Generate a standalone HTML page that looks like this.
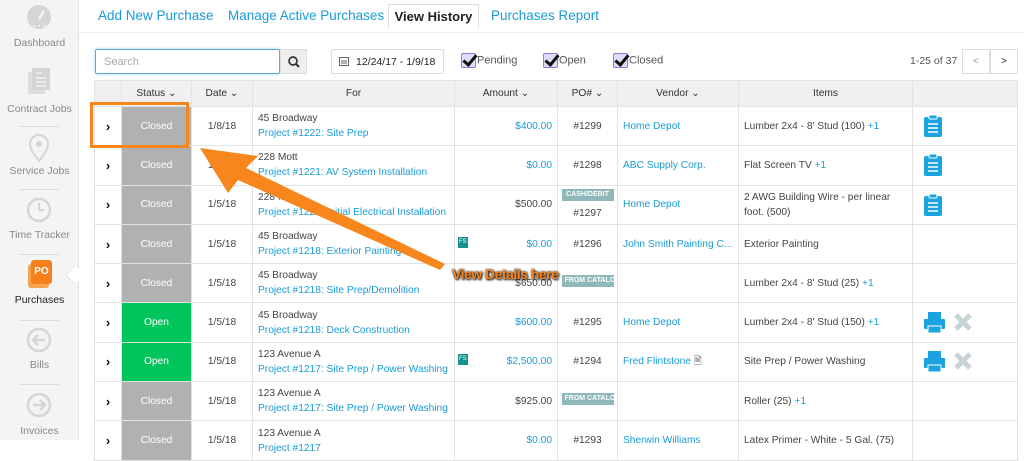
<!DOCTYPE html>
<html><head><meta charset="utf-8"><style>
*{box-sizing:border-box;margin:0;padding:0}
body{width:1024px;height:440px;overflow:hidden;background:#fff;font-family:"Liberation Sans",sans-serif;font-size:10.2px;color:#444;position:relative}
.side{position:absolute;left:0;top:0;width:79px;height:440px;background:#f4f4f4;border-right:1px solid #e2e2e2}
.si{position:absolute;left:0;width:79px;text-align:center;color:#888;font-size:10.5px}
.sep{position:absolute;left:19px;width:40px;border-top:1px solid #ddd}
.nav a{position:absolute;top:8px;font-size:13.5px;color:#1a9bd7;text-decoration:none}
.top{position:absolute;left:79px;top:32px;right:0;border-top:1px solid #eee}
table{position:absolute;left:94px;top:80px;border-collapse:collapse;table-layout:fixed;width:923px}
td,th{border:1px solid #e2e2e2;height:39.3px;vertical-align:middle;font-weight:normal;white-space:nowrap;overflow:hidden;line-height:15px}
th{height:26px;background:#f0f0f0;color:#333;font-size:10.2px}
.c{text-align:center}.r{text-align:right;padding-right:5px}
td.l{padding-left:5px}
.b{color:#1a9bd7}
.st{color:#fff;text-align:center;background:#b0b1b3}
.op{background:#00c55c}
.chev{font-weight:bold;color:#111;text-align:center;font-size:13px}
.tag{display:inline-block;background:#8fb8bb;color:#fff;font-size:7px;font-weight:bold;padding:1px 3px;width:52px;overflow:hidden;white-space:nowrap;line-height:10px}
.fs{display:inline-block;background:#16918e;color:#fff;font-size:6px;padding:1px;float:left;margin-left:3px;line-height:9px}
.cb{display:inline-block;width:15px;height:15px;border:1px solid #8b7fd9;border-radius:2px;background:#d9def6;position:relative;vertical-align:middle;margin-right:1px}
.cb:after{content:"";position:absolute;left:4px;top:-2px;width:5px;height:11px;border:solid #111;border-width:0 3px 3px 0;transform:rotate(40deg)}
</style></head><body>
<div class="side">
 <svg style="position:absolute;left:26px;top:4px" width="26" height="26"><circle cx="13" cy="13" r="12" fill="#d5d5d5"/><path d="M13 15 L18 7" stroke="#f4f4f4" stroke-width="2.5"/><circle cx="8" cy="22" r="1" fill="#f4f4f4"/><circle cx="13" cy="22" r="1" fill="#f4f4f4"/><circle cx="18" cy="22" r="1" fill="#f4f4f4"/></svg>
 <div class="si" style="top:37px">Dashboard</div>
 <svg style="position:absolute;left:27px;top:67px" width="24" height="28"><rect x="1" y="5" width="17" height="22" fill="#ddd"/><rect x="5" y="1" width="18" height="22" fill="#d5d5d5"/><path d="M9 6h6M9 11h10M9 15h10M9 19h10" stroke="#f4f4f4" stroke-width="1.5"/></svg>
 <div class="si" style="top:103px">Contract Jobs</div>
 <div class="sep" style="top:126px"></div>
 <svg style="position:absolute;left:29px;top:134px" width="20" height="28"><path d="M10 27 C3 18 1 14 1 10 A9 9 0 0 1 19 10 C19 14 17 18 10 27Z" fill="none" stroke="#d5d5d5" stroke-width="2"/><circle cx="10" cy="10" r="3" fill="#d5d5d5"/></svg>
 <div class="si" style="top:165px">Service Jobs</div>
 <div class="sep" style="top:189px"></div>
 <svg style="position:absolute;left:26px;top:197px" width="26" height="26"><circle cx="13" cy="13" r="11" fill="none" stroke="#d5d5d5" stroke-width="2.5"/><path d="M13 6v7h5" fill="none" stroke="#d5d5d5" stroke-width="2"/></svg>
 <div class="si" style="top:229px">Time Tracker</div>
 <div class="sep" style="top:254px"></div>
 <div style="position:absolute;left:28px;top:264px;width:21px;height:24px;background:#f7a24e;border-radius:3px"></div>
 <div style="position:absolute;left:31px;top:260px;width:21px;height:24px;background:#f7801e;border-radius:3px;color:#fff;font-weight:bold;font-size:10px;text-align:center;line-height:24px">PO</div>
 <div class="si" style="top:294px;color:#222">Purchases</div>
 <div style="position:absolute;left:68px;top:268px;width:14px;height:14px;background:#fff;transform:rotate(45deg);border-left:1px solid #e2e2e2;border-bottom:1px solid #e2e2e2"></div>
 <div class="sep" style="top:320px"></div>
 <svg style="position:absolute;left:26px;top:327px" width="26" height="26"><circle cx="13" cy="13" r="11" fill="none" stroke="#d5d5d5" stroke-width="2.5"/><path d="M19 13H8M12 8l-5 5 5 5" fill="none" stroke="#d5d5d5" stroke-width="2.5"/></svg>
 <div class="si" style="top:359px">Bills</div>
 <div class="sep" style="top:384px"></div>
 <svg style="position:absolute;left:26px;top:392px" width="26" height="26"><circle cx="13" cy="13" r="11" fill="none" stroke="#d5d5d5" stroke-width="2.5"/><path d="M7 13h11M14 8l5 5-5 5" fill="none" stroke="#d5d5d5" stroke-width="2.5"/></svg>
 <div class="si" style="top:425px">Invoices</div>
</div>
<div class="nav">
 <a style="left:98px">Add New Purchase</a>
 <a style="left:228px">Manage Active Purchases</a>
 <div style="position:absolute;left:388px;top:4px;width:91px;height:24px;border:1px solid #ddd;border-bottom:none;background:#fff;font-weight:bold;font-size:13px;color:#222;text-align:center;line-height:23px">View History</div>
 <a style="left:491px">Purchases Report</a>
</div>
<div class="top"></div>
<div style="position:absolute;left:95px;top:49px;width:185px;height:25px;border:1px solid #5aa8e0;border-radius:2px;box-shadow:0 0 3px #9cd0f2;padding:6px 8px;color:#aaa;font-size:11px">Search</div>
<div style="position:absolute;left:280px;top:49px;width:27px;height:25px;background:#eee;border:1px solid #ddd"><svg width="25" height="23"><circle cx="12" cy="11" r="4" fill="none" stroke="#333" stroke-width="1.7"/><path d="M15 14l3 3" stroke="#333" stroke-width="2"/></svg></div>
<div style="position:absolute;left:331px;top:49px;width:113px;height:25px;border:1px solid #ddd;border-radius:2px;padding:6px 0 0 24px;font-size:10.5px;color:#222">12/24/17 - 1/9/18</div>
<svg style="position:absolute;left:339px;top:56px" width="10" height="10"><rect x="0.5" y="1.5" width="9" height="8" fill="none" stroke="#666"/><path d="M2 5h6M2 7h6" stroke="#666"/></svg>
<div style="position:absolute;left:461px;top:53px;font-size:11px;color:#555"><span class="cb"></span>Pending</div>
<div style="position:absolute;left:543px;top:53px;font-size:11px;color:#555"><span class="cb"></span>Open</div>
<div style="position:absolute;left:613px;top:53px;font-size:11px;color:#555"><span class="cb"></span>Closed</div>
<div style="position:absolute;left:910px;top:55px;font-size:10.5px;color:#555">1-25 of 37</div>
<div style="position:absolute;left:962px;top:49px;width:28px;height:25px;border:1px solid #ddd;text-align:center;line-height:23px;color:#999">&lt;</div>
<div style="position:absolute;left:990px;top:49px;width:28px;height:25px;border:1px solid #ddd;text-align:center;line-height:23px;color:#222">&gt;</div>
<table>
<colgroup><col style="width:27px"><col style="width:70px"><col style="width:61px"><col style="width:202px"><col style="width:103px"><col style="width:60px"><col style="width:121px"><col style="width:174px"><col style="width:105px"></colgroup>
<tr><th></th><th>Status ⌄</th><th>Date ⌄</th><th>For</th><th>Amount ⌄</th><th>PO# ⌄</th><th>Vendor ⌄</th><th>Items</th><th></th></tr>
<tr><td class="chev">›</td><td class="st">Closed</td><td class="c">1/8/18</td><td class="l">45 Broadway<br><span class="b">Project #1222: Site Prep</span></td><td class="r b">$400.00</td><td class="c">#1299</td><td class="l b">Home Depot</td><td class="l">Lumber 2x4 - 8' Stud (100) <span class="b">+1</span></td><td class="l"><svg width="22" height="24" style="margin-left:4px;vertical-align:middle"><rect x="2" y="3" width="18" height="20" rx="2" fill="#1aa3e0"/><rect x="7" y="1" width="8" height="4" rx="1" fill="#1aa3e0" stroke="#fff"/><path d="M6 10h10M6 14h10M6 18h10" stroke="#fff" stroke-width="1.5"/></svg></td></tr>
<tr><td class="chev">›</td><td class="st">Closed</td><td class="c">1/5/18</td><td class="l">228 Mott<br><span class="b">Project #1221: AV System Installation</span></td><td class="r b">$0.00</td><td class="c">#1298</td><td class="l b">ABC Supply Corp.</td><td class="l">Flat Screen TV <span class="b">+1</span></td><td class="l"><svg width="22" height="24" style="margin-left:4px;vertical-align:middle"><rect x="2" y="3" width="18" height="20" rx="2" fill="#1aa3e0"/><rect x="7" y="1" width="8" height="4" rx="1" fill="#1aa3e0" stroke="#fff"/><path d="M6 10h10M6 14h10M6 18h10" stroke="#fff" stroke-width="1.5"/></svg></td></tr>
<tr><td class="chev">›</td><td class="st">Closed</td><td class="c">1/5/18</td><td class="l">228 Mott<br><span class="b">Project #1220: Initial Electrical Installation</span></td><td class="r">$500.00</td><td class="c"><span class="tag">CASH/DEBIT</span><br>#1297</td><td class="l b">Home Depot</td><td class="l">2 AWG Building Wire - per linear<br>foot. (500)</td><td class="l"><svg width="22" height="24" style="margin-left:4px;vertical-align:middle"><rect x="2" y="3" width="18" height="20" rx="2" fill="#1aa3e0"/><rect x="7" y="1" width="8" height="4" rx="1" fill="#1aa3e0" stroke="#fff"/><path d="M6 10h10M6 14h10M6 18h10" stroke="#fff" stroke-width="1.5"/></svg></td></tr>
<tr><td class="chev">›</td><td class="st">Closed</td><td class="c">1/5/18</td><td class="l">45 Broadway<br><span class="b">Project #1218: Exterior Painting</span></td><td class="r b"><span class="fs">FS</span>$0.00</td><td class="c">#1296</td><td class="l b">John Smith Painting C...</td><td class="l">Exterior Painting</td><td></td></tr>
<tr><td class="chev">›</td><td class="st">Closed</td><td class="c">1/5/18</td><td class="l">45 Broadway<br><span class="b">Project #1218: Site Prep/Demolition</span></td><td class="r">$650.00</td><td class="c"><span class="tag">FROM CATALOG</span></td><td></td><td class="l">Lumber 2x4 - 8' Stud (25) <span class="b">+1</span></td><td></td></tr>
<tr><td class="chev">›</td><td class="st op">Open</td><td class="c">1/5/18</td><td class="l">45 Broadway<br><span class="b">Project #1218: Deck Construction</span></td><td class="r b">$600.00</td><td class="c">#1295</td><td class="l b">Home Depot</td><td class="l">Lumber 2x4 - 8' Stud (150) <span class="b">+1</span></td><td class="l"><svg width="60" height="24" style="margin-left:6px;vertical-align:middle"><rect x="4" y="1" width="13" height="7" fill="#1aa3e0"/><rect x="0" y="8" width="21" height="10" rx="1" fill="#1aa3e0"/><rect x="4" y="15" width="13" height="7" fill="#1aa3e0" stroke="#fff"/><path d="M32 4l14 14M46 4L32 18" stroke="#c8d3d6" stroke-width="5"/></svg></td></tr>
<tr><td class="chev">›</td><td class="st op">Open</td><td class="c">1/5/18</td><td class="l">123 Avenue A<br><span class="b">Project #1217: Site Prep / Power Washing</span></td><td class="r b"><span class="fs">FS</span>$2,500.00</td><td class="c">#1294</td><td class="l b">Fred Flintstone <span style="color:#666">🗎</span></td><td class="l">Site Prep / Power Washing</td><td class="l"><svg width="60" height="24" style="margin-left:6px;vertical-align:middle"><rect x="4" y="1" width="13" height="7" fill="#1aa3e0"/><rect x="0" y="8" width="21" height="10" rx="1" fill="#1aa3e0"/><rect x="4" y="15" width="13" height="7" fill="#1aa3e0" stroke="#fff"/><path d="M32 4l14 14M46 4L32 18" stroke="#c8d3d6" stroke-width="5"/></svg></td></tr>
<tr><td class="chev">›</td><td class="st">Closed</td><td class="c">1/5/18</td><td class="l">123 Avenue A<br><span class="b">Project #1217: Site Prep / Power Washing</span></td><td class="r">$925.00</td><td class="c"><span class="tag">FROM CATALOG</span></td><td></td><td class="l">Roller (25) <span class="b">+1</span></td><td></td></tr>
<tr><td class="chev">›</td><td class="st">Closed</td><td class="c">1/5/18</td><td class="l">123 Avenue A<br><span class="b">Project #1217</span></td><td class="r b">$0.00</td><td class="c">#1293</td><td class="l b">Sherwin Williams</td><td class="l">Latex Primer - White - 5 Gal. (75)</td><td></td></tr>
</table>
<div style="position:absolute;left:90px;top:102px;width:99px;height:46px;border:3px solid #f7861c"></div>
<svg style="position:absolute;left:0;top:0" width="1024" height="440"><path d="M200 148 L258 156 L246 168 L445 264 L440 270 L238 180 L228 193 Z" fill="#f7861c"/></svg>
<div style="position:absolute;left:452px;top:266px;font-size:14px;font-weight:bold;color:#f7861c;text-shadow:1px 1px 2px #000,0 0 2px #000;letter-spacing:-0.5px">View Details here</div>
</body></html>
